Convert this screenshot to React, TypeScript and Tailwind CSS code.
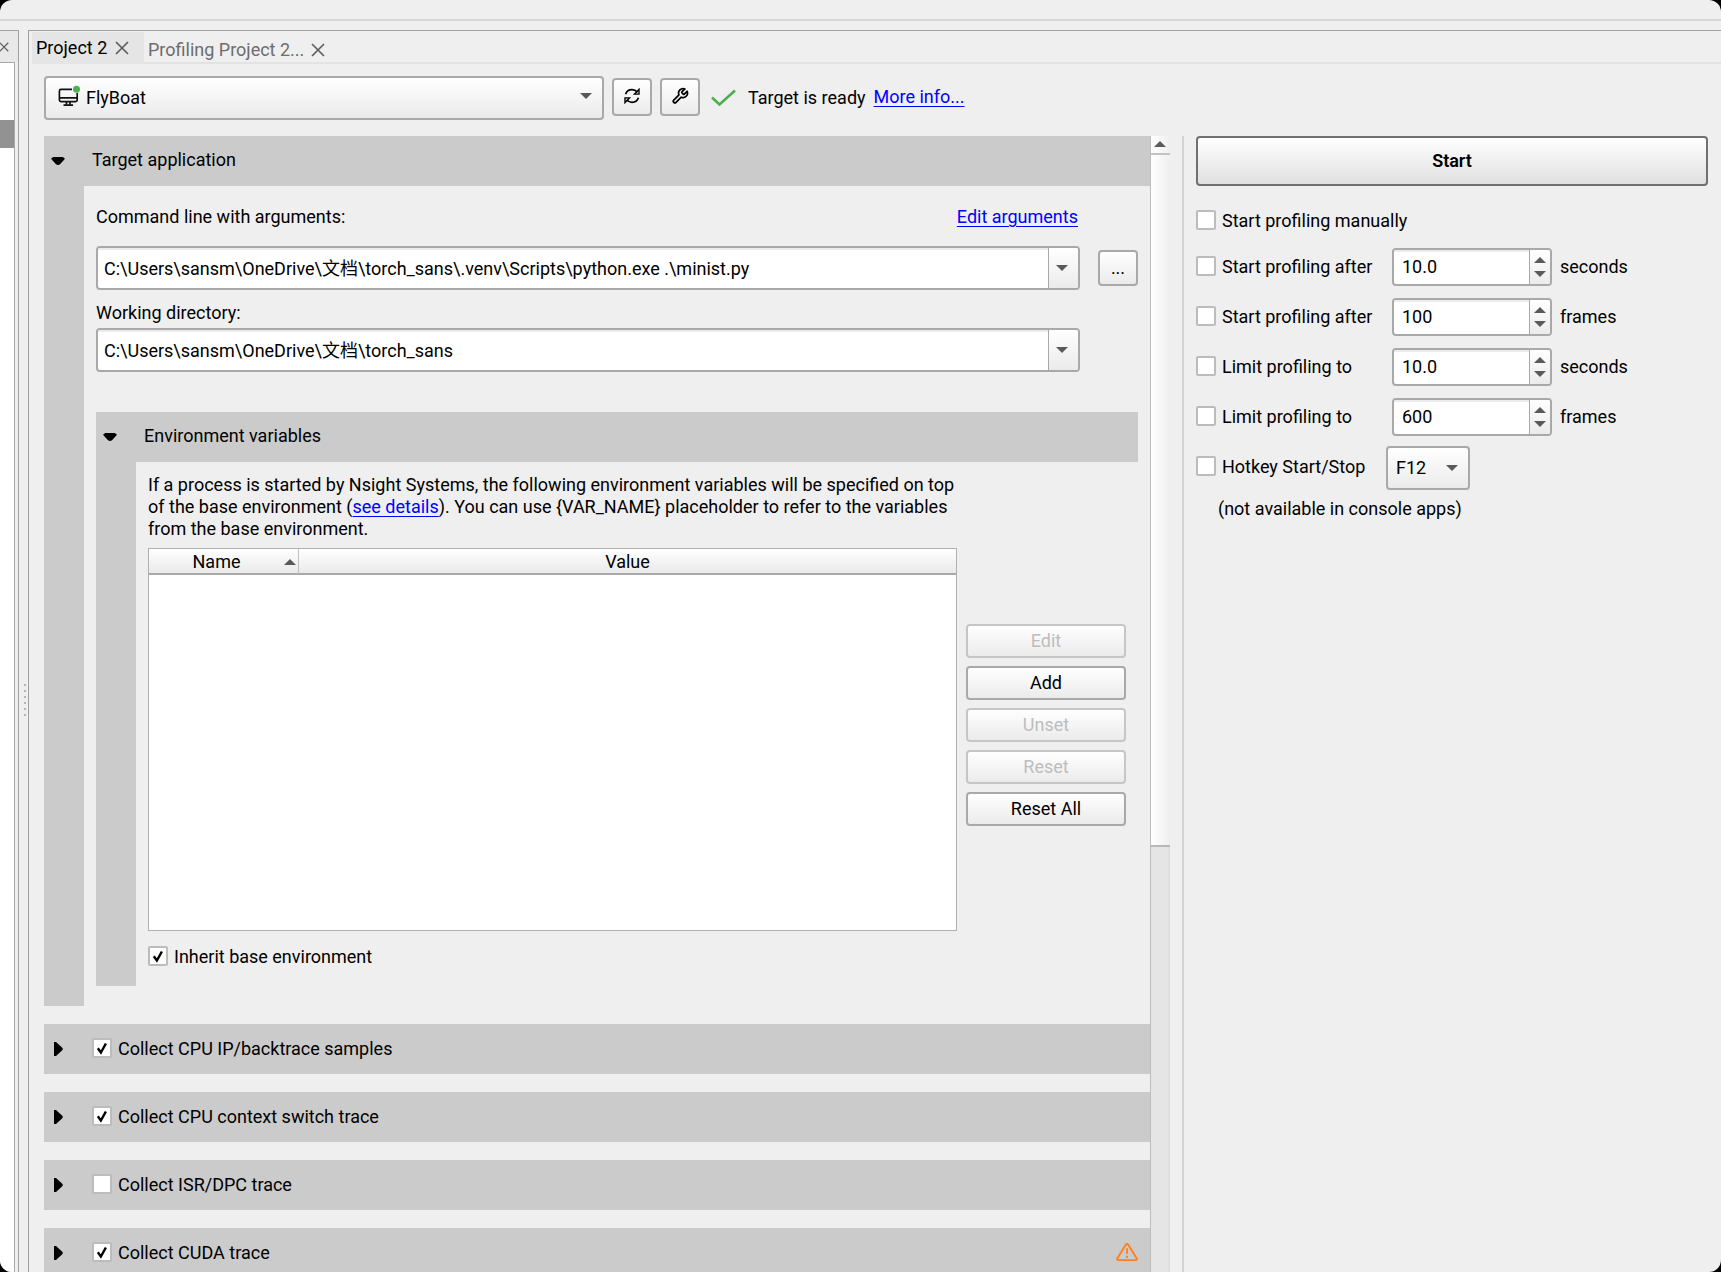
import { ReactNode, useState } from 'react';

type Direction = 'up' | 'down';

function Triangle({ direction = 'down' }: { direction?: Direction }) {
  return (
    <svg width="12" height="6" viewBox="0 0 12 6" className="block shrink-0" aria-hidden="true">
      <path d={direction === 'down' ? 'M0 0h12L6 6z' : 'M0 6h12L6 0z'} fill="#5a5a5a" />
    </svg>
  );
}

function CloseIcon({ size = 14 }: { size?: number }) {
  return (
    <svg width={size} height={size} viewBox="0 0 14 14" className="block" aria-hidden="true">
      <path d="M1 1l12 12M13 1L1 13" stroke="#5f5f5f" strokeWidth="1.7" fill="none" />
    </svg>
  );
}

function ExpandArrow({ open }: { open: boolean }) {
  return open ? (
    <svg width="14" height="8" viewBox="0 0 14 8" aria-hidden="true">
      <path d="M2.2 0h9.6L14 1.8 9 7.2Q7 8.8 5 7.2L0 1.8z" fill="#000" />
    </svg>
  ) : (
    <svg width="9" height="14" viewBox="0 0 9 14" aria-hidden="true">
      <path d="M0 0h2l6 5.5q1.6 1.5 0 3L2 14H0z" fill="#000" />
    </svg>
  );
}

function MonitorIcon() {
  return (
    <svg width="22" height="22" viewBox="0 0 22 22" fill="none" stroke="#111" strokeWidth="1.7" aria-hidden="true">
      <path d="M14 4.3H3q-1.6 0-1.6 1.6v9.2q0 1.6 1.6 1.6h14.6q1.6 0 1.6-1.6V8" />
      <path d="M1.4 12.8h17.8M8.5 17v3M12 17v3M5.5 20.2h9.6" />
      <circle cx="18.5" cy="4.3" r="3.5" fill="#4caf50" stroke="none" />
    </svg>
  );
}

function RefreshIcon() {
  return (
    <svg width="16" height="16" viewBox="0 0 16 16" fill="none" stroke="#000" strokeWidth="1.7" aria-hidden="true">
      <path d="M1.6 6.2C2.6 3 5 1.6 8 1.6c2.3 0 4 .9 5.4 2.6M14.4 9.8C13.4 13 11 14.4 8 14.4c-2.3 0-4-.9-5.4-2.6" />
      <path d="M15 1.4v4.7h-4.5z" strokeWidth="1.4" />
      <path d="M1 14.6V9.9h4.5z" strokeWidth="1.4" />
    </svg>
  );
}

function WrenchIcon() {
  return (
    <svg width="18" height="18" viewBox="0 0 24 24" fill="none" stroke="#000" strokeWidth="2.3" strokeLinejoin="round" aria-hidden="true">
      <path d="M14.7 6.3a1 1 0 0 0 0 1.6l1.6 1.6a1 1 0 0 0 1.4 0l3.8-3.8a6 6 0 0 1-7.9 7.9l-6.9 6.9a2.1 2.1 0 0 1-3-3l6.9-6.9a6 6 0 0 1 7.9-7.9z" />
    </svg>
  );
}

function WarningIcon() {
  return (
    <svg width="22" height="18" viewBox="0 0 22 18" fill="none" stroke="#ff7f1f" strokeWidth="1.9" strokeLinejoin="round" aria-hidden="true">
      <path d="M9.9 1.6q1.1-1.4 2.2 0l8.6 13.8q.6 1.6-1 1.7H2.3q-1.6-.1-1-1.7z" />
      <path d="M11 5.3v5.4M11 12.8v2.2" />
    </svg>
  );
}

function Checkbox({ children, defaultChecked = false }: { children: ReactNode; defaultChecked?: boolean }) {
  return (
    <label className="flex items-center gap-1.5">
      <span className="grid size-5 shrink-0">
        <input
          type="checkbox"
          defaultChecked={defaultChecked}
          className="peer size-5 appearance-none rounded-xs border-2 border-[#bcbcbc] bg-white [grid-area:1/1]"
        />
        <svg
          viewBox="0 0 20 20"
          className="pointer-events-none invisible size-5 [grid-area:1/1] peer-checked:visible"
          aria-hidden="true"
        >
          <path d="M5.8 10.2l3.1 4.3 5-9" stroke="#000" strokeWidth="2.4" fill="none" />
        </svg>
      </span>
      <span className="pt-0.5">{children}</span>
    </label>
  );
}

const raised = 'rounded border-2 border-[#a9a9a9] bg-linear-to-b from-white to-[#ebebeb]';

function ComboInput({ id, value }: { id: string; value: string }) {
  return (
    <div className="flex h-11 min-w-0 flex-1 overflow-hidden rounded border-2 border-[#a9a9a9] bg-white">
      <input
        id={id}
        defaultValue={value}
        className="min-w-0 flex-1 border-t-2 border-[#ececec] px-1.5 outline-none"
      />
      <button
        type="button"
        aria-label="Show history"
        className="flex w-[30px] items-center justify-center border-l border-[#a9a9a9] bg-linear-to-b from-white to-[#ebebeb] pr-1"
      >
        <Triangle />
      </button>
    </div>
  );
}

function SpinBox({ label, value }: { label: string; value: string }) {
  return (
    <div className="flex h-[38px] w-40 overflow-hidden rounded border-2 border-[#a9a9a9] bg-white">
      <input
        aria-label={label}
        defaultValue={value}
        className="w-0 flex-1 border-t-2 border-[#ececec] px-2 pb-0.5 outline-none"
      />
      <div className="flex w-[21px] flex-col border-l border-[#a9a9a9] bg-linear-to-b from-white to-[#ebebeb] pr-px">
        <button type="button" aria-label="Increase" className="flex flex-1 items-end justify-center pb-1">
          <Triangle direction="up" />
        </button>
        <button type="button" aria-label="Decrease" className="flex flex-1 items-start justify-center pt-1">
          <Triangle />
        </button>
      </div>
    </div>
  );
}

interface SectionProps {
  title: ReactNode;
  name: string;
  extra?: ReactNode;
  defaultOpen?: boolean;
  children?: ReactNode;
}

function Section({ title, name, extra, defaultOpen = false, children }: SectionProps) {
  const [open, setOpen] = useState(defaultOpen);

  return (
    <section>
      <div className="flex h-[50px] items-center bg-[#cbcbcb] pr-3 pb-0.5">
        <button
          type="button"
          aria-label={`Toggle ${name}`}
          aria-expanded={open}
          onClick={() => setOpen(!open)}
          className="flex h-full w-12 shrink-0 items-center pt-0.5 pl-1.5"
        >
          <span className="flex w-4 justify-center">
            <ExpandArrow open={open} />
          </span>
        </button>
        <div className="flex-1">{title}</div>
        {extra}
      </div>
      {open && children && (
        <div className="flex">
          <div className="w-10 shrink-0 bg-[#cbcbcb]" />
          <div className="min-w-0 flex-1">{children}</div>
        </div>
      )}
    </section>
  );
}

const envButtons = [
  { label: 'Edit', enabled: false },
  { label: 'Add', enabled: true },
  { label: 'Unset', enabled: false },
  { label: 'Reset', enabled: false },
  { label: 'Reset All', enabled: true },
];

function EnvironmentVariables() {
  return (
    <Section title="Environment variables" name="Environment variables" defaultOpen>
      <div className="flex flex-col pt-3 pr-3 pb-5 pl-3">
        <p className="max-w-[820px] leading-[22px]">
          If a process is started by Nsight Systems, the following environment variables will be specified on top
          <br />
          of the base environment (
          <a href="#details" className="text-[#0000ff] underline underline-offset-3">see details</a>
          ). You can use {'{VAR_NAME}'} placeholder to refer to the variables
          <br />
          from the base environment.
        </p>
        <div className="mt-2 flex gap-[9px]">
          <div className="h-[383px] flex-1 border border-[#b0b0b0] bg-white">
            <table className="w-full table-fixed border-separate border-spacing-0">
              <thead>
                <tr className="bg-linear-to-b from-white to-[#e8e8e8] leading-[22px]">
                  <th className="w-[150px] border-r border-b-2 border-r-[#c0c0c0] border-b-[#a9a9a9] p-0 pt-0.5 font-normal">
                    <span className="flex items-center pr-0.5">
                      <span className="flex-1 text-center">Name</span>
                      <Triangle direction="up" />
                    </span>
                  </th>
                  <th className="border-b-2 border-b-[#a9a9a9] p-0 pt-0.5 font-normal">Value</th>
                </tr>
              </thead>
              <tbody />
            </table>
          </div>
          <div className="flex w-40 flex-col gap-2 pt-[76px]">
            {envButtons.map((b) => (
              <button
                key={b.label}
                type="button"
                disabled={!b.enabled}
                className="h-[34px] rounded border-2 border-[#a9a9a9] bg-linear-to-b from-white to-[#ebebeb] disabled:border-[#c6c6c6] disabled:text-[#bdbdbd]"
              >
                {b.label}
              </button>
            ))}
          </div>
        </div>
        <div className="mt-[15px] flex h-5">
          <Checkbox defaultChecked>Inherit base environment</Checkbox>
        </div>
      </div>
    </Section>
  );
}

function TargetApplication() {
  return (
    <Section title="Target application" name="Target application" defaultOpen>
      <div className="flex flex-col pt-5 pr-3 pb-5 pl-3">
        <div className="mr-[60px] flex justify-between leading-[22px]">
          <label htmlFor="command-line">Command line with arguments:</label>
          <a href="#arguments" className="text-[#0000ff] underline underline-offset-3">Edit arguments</a>
        </div>
        <div className="mt-[18px] flex items-center gap-[18px]">
          <ComboInput id="command-line" value="C:\Users\sansm\OneDrive\文档\torch_sans\.venv\Scripts\python.exe .\minist.py" />
          <button type="button" aria-label="Browse" className={`h-9 w-10 ${raised}`}>
            ...
          </button>
        </div>
        <label htmlFor="working-dir" className="mt-3 leading-[22px]">Working directory:</label>
        <div className="mt-1 mr-[58px] mb-10 flex">
          <ComboInput id="working-dir" value="C:\Users\sansm\OneDrive\文档\torch_sans" />
        </div>
        <EnvironmentVariables />
      </div>
    </Section>
  );
}

const collectOptions = [
  { label: 'Collect CPU IP/backtrace samples', checked: true, warning: false },
  { label: 'Collect CPU context switch trace', checked: true, warning: false },
  { label: 'Collect ISR/DPC trace', checked: false, warning: false },
  { label: 'Collect CUDA trace', checked: true, warning: true },
];

const limits = [
  { label: 'Start profiling after', value: '10.0', unit: 'seconds' },
  { label: 'Start profiling after', value: '100', unit: 'frames' },
  { label: 'Limit profiling to', value: '10.0', unit: 'seconds' },
  { label: 'Limit profiling to', value: '600', unit: 'frames' },
];

function Toolbar() {
  return (
    <div className="flex h-11 items-center">
      <div className={`grid h-11 w-[560px] items-center ${raised}`}>
        <select aria-label="Target" className="h-full w-full appearance-none pl-10 outline-none [grid-area:1/1]">
          <option>FlyBoat</option>
        </select>
        <div className="pointer-events-none flex items-center justify-between pr-2.5 pb-1 pl-3 [grid-area:1/1]">
          <MonitorIcon />
          <Triangle />
        </div>
      </div>
      <button type="button" aria-label="Refresh" className={`mb-1 ml-2 flex h-[38px] w-10 items-center justify-center self-end pb-0.5 ${raised}`}>
        <RefreshIcon />
      </button>
      <button type="button" aria-label="Configure" className={`mb-1 ml-2 flex h-[38px] w-10 items-center justify-center self-end pb-0.5 ${raised}`}>
        <WrenchIcon />
      </button>
      <svg width="26" height="18" viewBox="0 0 26 18" className="ml-[11px] block" aria-hidden="true">
        <path d="M1 8.5l7.5 7L24 1.5" stroke="#4caf50" strokeWidth="2.6" fill="none" />
      </svg>
      <span className="ml-[11px]">Target is ready</span>
      <a href="#info" className="ml-2 pb-0.5 text-[#0000ff] underline underline-offset-3">More info...</a>
    </div>
  );
}

function StartPanel() {
  return (
    <aside className="w-[539px] shrink-0 border-l-2 border-[#d3d3d3] pr-[13px] pl-3">
      <button
        type="button"
        className="h-[50px] w-full rounded border-2 border-[#707070] bg-linear-to-b from-white to-[#e0e0e0] font-semibold"
      >
        Start
      </button>
      <div className="mt-6 flex h-5">
        <Checkbox>Start profiling manually</Checkbox>
      </div>
      <div className="mt-[18px] flex flex-col gap-3">
        {limits.map((l, i) => (
          <div key={i} className="flex h-[38px] items-center">
            <div className="w-[196px] pb-0.5">
              <Checkbox>{l.label}</Checkbox>
            </div>
            <SpinBox label={`${l.label} (${l.unit})`} value={l.value} />
            <span className="pl-2">{l.unit}</span>
          </div>
        ))}
      </div>
      <div className="mt-2.5 flex h-11 items-center">
        <div className="w-[190px] pb-1">
          <Checkbox>Hotkey Start/Stop</Checkbox>
        </div>
        <div className={`grid h-11 w-[84px] items-center ${raised}`}>
          <select aria-label="Hotkey" className="h-full w-full appearance-none pl-2 outline-none [grid-area:1/1]">
            <option>F12</option>
          </select>
          <div className="pointer-events-none flex justify-end pr-2.5 [grid-area:1/1]">
            <Triangle />
          </div>
        </div>
      </div>
      <p className="mt-2 pl-[22px] leading-[22px]">(not available in console apps)</p>
    </aside>
  );
}

export default function App() {
  return (
    <div className="h-screen overflow-hidden bg-black font-[Roboto,'Noto_Sans_CJK_SC',sans-serif] text-lg leading-6 text-black">
      <div className="flex h-full flex-col overflow-hidden rounded-xl bg-[#efefef]">
        <div className="h-[21px] shrink-0 border-b-2 border-[#d6d6d6]" />
        <div className="mt-[9px] flex min-h-0 flex-1">
          {/* edge of the docked explorer */}
          <div className="flex w-[19px] shrink-0 flex-col border-t border-r border-[#a3a3a3]">
            <div className="flex h-[31px] items-center bg-[#e8e8e8]">
              <button type="button" aria-label="Close explorer" className="-ml-px">
                <CloseIcon size={10} />
              </button>
            </div>
            <div className="mr-[3px] flex-1 border-t border-r border-[#a9a9a9] bg-white pt-[57px]">
              <div className="h-7 bg-[#929292]" />
            </div>
          </div>
          <div className="flex w-[9px] shrink-0 flex-col items-center justify-center gap-1 pt-[98px] pl-0.5">
            {[0, 1, 2, 3, 4, 5].map((n) => (
              <span key={n} className="size-0.5 bg-[#b5b5b5]" />
            ))}
          </div>

          <main className="flex min-w-0 flex-1 flex-col border-t border-l border-[#a0a0a0]">
            <nav className="mt-px ml-[3px] flex h-8 shrink-0">
              <div className="flex w-28 items-center gap-2 bg-[#e5e5e5] pl-1">
                <button type="button">Project 2</button>
                <button type="button" aria-label="Close Project 2">
                  <CloseIcon />
                </button>
              </div>
              <div className="flex flex-1 items-center gap-[7px] border-b-2 border-[#e3e3e3] pt-1.5 pl-1 text-[#6d6d6d]">
                <button type="button">Profiling Project 2...</button>
                <button type="button" aria-label="Close Profiling Project 2">
                  <CloseIcon />
                </button>
              </div>
            </nav>

            <div className="flex min-h-0 flex-1 flex-col pt-3 pl-[15px]">
              <Toolbar />
              <div className="mt-4 flex min-h-0 flex-1">
                <div className="flex min-w-0 flex-1 flex-col gap-[18px] overflow-hidden *:shrink-0">
                  <TargetApplication />
                  {collectOptions.map((o) => (
                    <Section
                      key={o.label}
                      name={o.label}
                      title={<Checkbox defaultChecked={o.checked}>{o.label}</Checkbox>}
                      extra={o.warning && <WarningIcon />}
                    />
                  ))}
                </div>
                <div className="mr-3 flex w-5 shrink-0 flex-col border-l border-[#bdbdbd]">
                  <button
                    type="button"
                    aria-label="Scroll up"
                    className="flex h-[19px] items-center justify-center border-b-2 border-[#c2c2c2] bg-linear-to-r from-white to-[#efefef] pr-0.5 pb-0.5"
                  >
                    <Triangle direction="up" />
                  </button>
                  <div className="h-[692px] shrink-0 border-b-2 border-[#b8b8b8] bg-linear-to-r from-white to-[#efefef]" />
                  <div className="flex-1 border-r-2 border-[#dedede] bg-[#e5e5e5]" />
                </div>
                <StartPanel />
              </div>
            </div>
          </main>
        </div>
      </div>
    </div>
  );
}
